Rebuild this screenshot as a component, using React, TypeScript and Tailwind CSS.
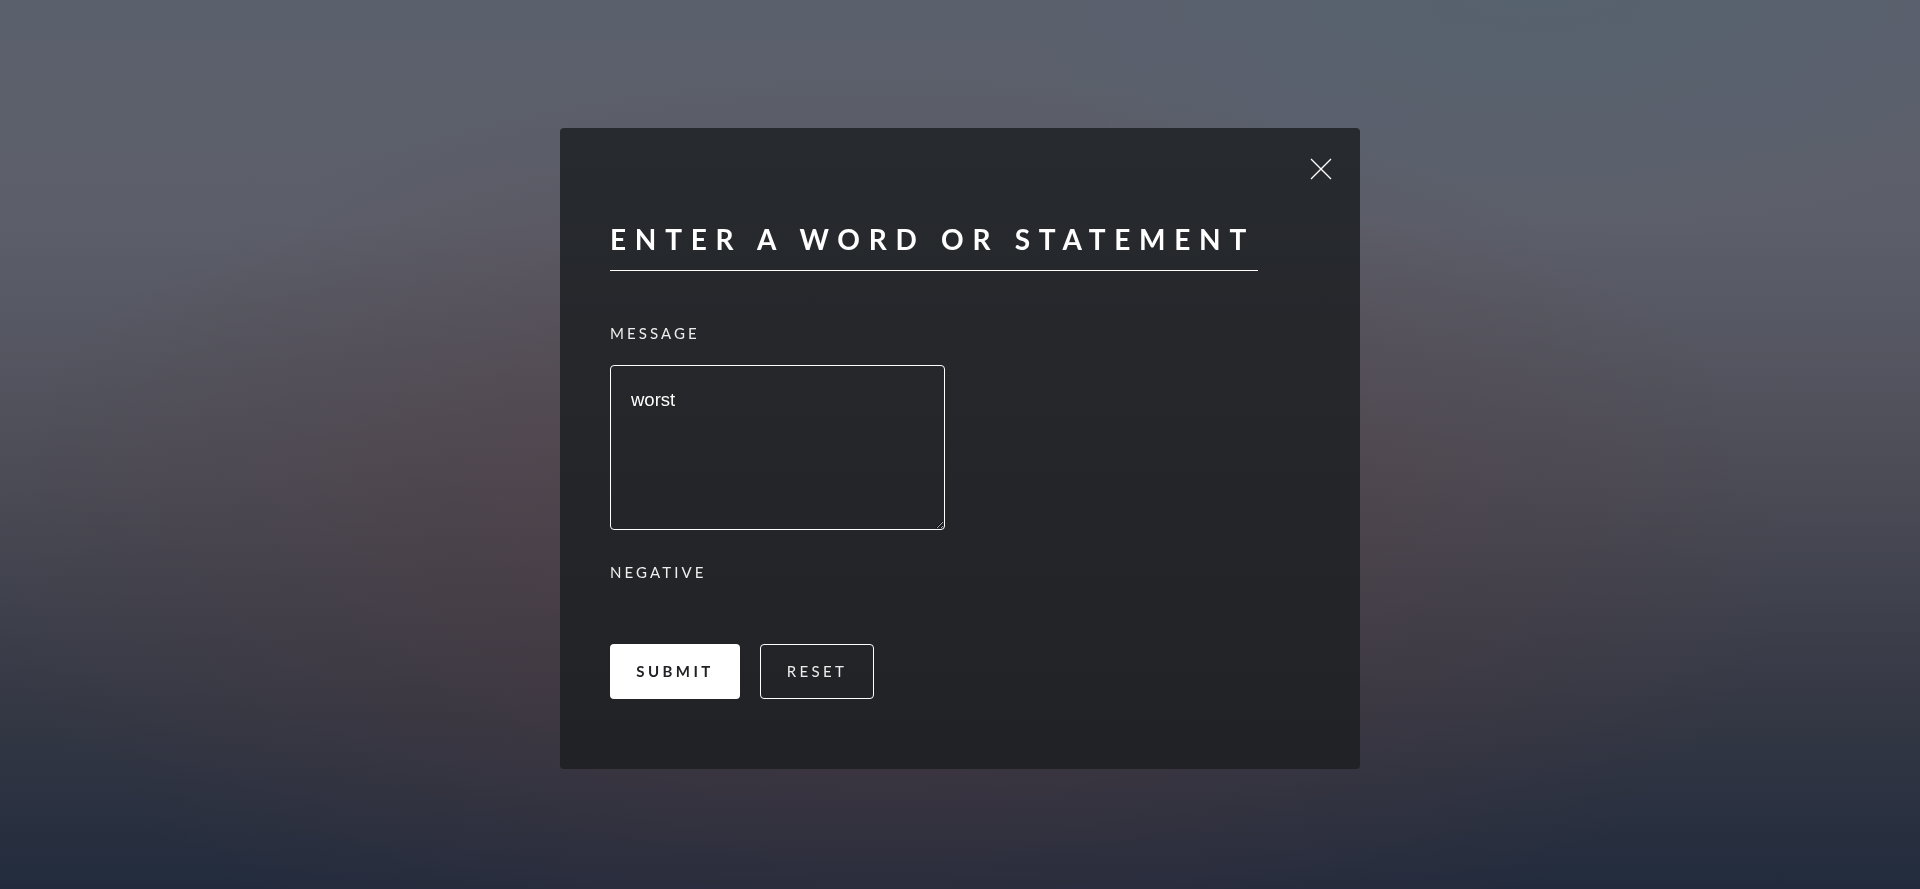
function CloseIcon() {
  return (
    <svg width="22" height="22" viewBox="0 0 22 22" fill="none" stroke="#fff" strokeWidth="1.3">
      <path d="M1 1L21 21M21 1L1 21" />
    </svg>
  );
}

export default function App() {
  return (
    <div className="h-[889px] w-full overflow-hidden flex justify-center pt-[128px] font-['Lato',sans-serif] bg-[radial-gradient(ellipse_520px_260px_at_80%_0%,rgba(80,100,115,0.35),rgba(80,100,115,0)),radial-gradient(ellipse_900px_480px_at_46%_62%,rgba(86,56,60,0.55),rgba(86,56,60,0)),linear-gradient(180deg,#5a606c_0%,#5c5f6a_25%,#4d4d57_52%,#343844_80%,#222b3d_100%)]">
      <div className="relative w-[800px] h-[641px] rounded-[4px] pl-[50px] bg-gradient-to-b from-[#272a2e] to-[#212225] text-white will-change-transform">
        <button className="absolute top-[30px] right-[28px]">
          <CloseIcon />
        </button>
        <h2 className="inline-block mt-[93px] w-[648px] border-b border-white pb-[13px] text-[28px] leading-[36px] font-bold tracking-[8.75px] whitespace-nowrap">
          ENTER A WORD OR STATEMENT
        </h2>
        <label className="block mt-[52px] text-[15px] leading-[20px] tracking-[3.1px] text-[#eeeeee]">MESSAGE</label>
        <textarea
          defaultValue="worst"
          className="block mt-[22px] w-[335px] h-[165px] bg-transparent border border-white rounded-[4px] px-[20px] pt-[22px] pb-[20px] font-['Liberation_Sans',sans-serif] text-[18.5px] leading-[24px] outline-none"
        />
        <label className="block mt-[32px] text-[15px] leading-[20px] tracking-[3.1px] text-[#eeeeee]">NEGATIVE</label>
        <div className="flex gap-[20px] mt-[62px]">
          <button className="w-[130px] h-[55px] rounded-[4px] bg-white text-[#222226] text-[15px] font-bold tracking-[3.4px]">SUBMIT</button>
          <button className="w-[114px] h-[55px] rounded-[4px] border border-white text-[15px] tracking-[3.4px] text-[#eeeeee]">RESET</button>
        </div>
      </div>
    </div>
  );
}
